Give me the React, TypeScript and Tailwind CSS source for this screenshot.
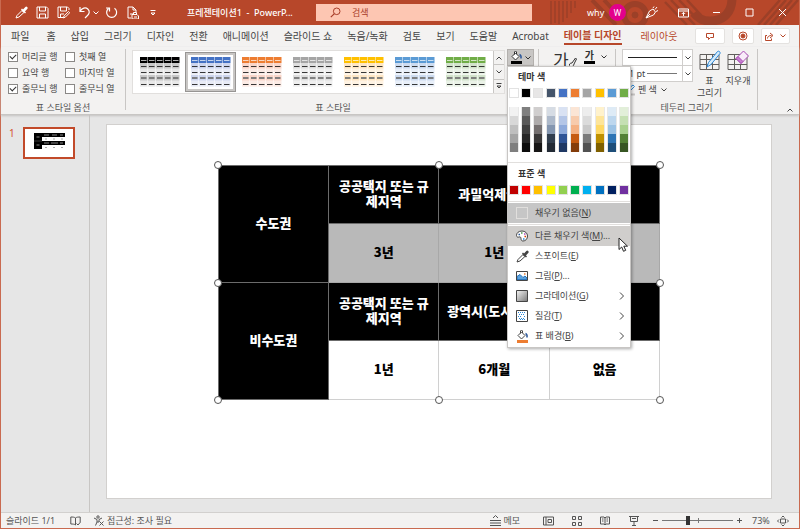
import type { ReactNode } from "react";

/* ---------- shared drawing helpers ---------- */

function Svg({ w, h, children, className = "" }: { w: number; h: number; children: ReactNode; className?: string }) {
  return (
    <svg width={w} height={h} viewBox={`0 0 ${w} ${h}`} fill="none" stroke="currentColor" className={`shrink-0 ${className}`} aria-hidden="true">
      {children}
    </svg>
  );
}

function Chevron({ dir = "down", className = "" }: { dir?: "down" | "up" | "right"; className?: string }) {
  const d = dir === "down" ? "M1.5 2.5 4 5l2.500-2.500" : dir === "up" ? "M1.500 5.500 4 3l2.500 2.500" : "M2 0.500 5.500 4 2 7.500";
  return (
    <Svg w={8} h={8} className={className}>
      <path d={d} />
    </Svg>
  );
}

/* ---------- title bar ---------- */

function DropperIcon() {
  return (
    <Svg w={13} h={13}>
      <path d="M1 12l1-2.500L7.500 4l2 2L4 11z" />
      <path d="M6.500 3l4 4" strokeWidth="1.500" />
      <path d="M8.500 5l2.800-3" strokeWidth="2.600" strokeLinecap="round" />
    </Svg>
  );
}

const quickAccess: { label: string; gap: string; icon: ReactNode }[] = [
  { label: "스포이트", gap: "ml-[14px]", icon: <DropperIcon /> },
  {
    label: "저장",
    gap: "ml-2",
    icon: (
      <Svg w={13} h={13}>
        <path d="M1 1h9.500L12 2.500V12H1zM3.500 1v4h6V1M3.500 12V8h6v4" />
      </Svg>
    ),
  },
  {
    label: "다른 이름으로 저장",
    gap: "ml-2",
    icon: (
      <Svg w={13} h={13}>
        <path d="M6 11.500H1V1h9.500L12 2.500V4M3.500 1v4h6V1M3.500 11.500V8H7M6.500 12l.5-2.200 4.500-4.300 1.200 1.200L8.500 11z" />
      </Svg>
    ),
  },
  {
    label: "실행 취소",
    gap: "ml-2",
    icon: (
      <Svg w={13} h={13}>
        <path d="M2 1v4.500h4.500M2 5.500C4 2 7.500 1 9.800 3c2.500 2.200 1.500 5-.8 7L7 12" strokeWidth="1.200" />
      </Svg>
    ),
  },
];

function TitleBar() {
  return (
    <header className="relative flex h-[25px] shrink-0 items-center overflow-hidden bg-[#b7472a] text-white">
      <svg className="absolute right-0 top-0" width="267" height="25" viewBox="0 0 267 25" fill="none" stroke="#9c4028" aria-hidden="true">
        <path d="M19 1v23M23 1v22M27 1v23M31 1v21M35 1v17M39 1v12M43 1v7" strokeWidth="1.500" />
        <path d="M60 0l24 25M72 0l14 15" strokeWidth="4" />
        <circle cx="103" cy="15" r="11" strokeWidth="6" />
        <circle cx="103" cy="15" r="3" fill="#9c4028" />
        <path d="M133 2l22 23M139 0l24 25M147 0l22 23M155 0l14 15" strokeWidth="2.500" />
        <path d="M200-2c0 14-8 23-22 23-8 0-12-3-16-8" strokeWidth="9" />
        <path d="M226 25l22-25M232 25l22-25M238 25l22-25M244 25l22-25" strokeWidth="2.500" />
      </svg>
      <div className="flex w-[315px] shrink-0 items-center">
        {quickAccess.map((q) => (
          <button key={q.label} aria-label={q.label} className={q.gap}>
            {q.icon}
          </button>
        ))}
        <button aria-label="실행 취소 목록" className="ml-px">
          <Chevron />
        </button>
        <button aria-label="다시 실행" className="ml-[5px]">
          <Svg w={13} h={13}>
            <path d="M3.500 2.500A5 5 0 1 0 9.500 2.300M1 2h3.500v3.500" strokeWidth="1.200" />
          </Svg>
        </button>
        <button aria-label="내보내기" className="ml-2">
          <Svg w={13} h={13}>
            <path d="M5 12H2V1h5l3 3v2M7 1v3h3M4 8h3" />
            <path d="M6 8.500h5l1.500 1.500V13H6zM7.500 8.500v-2h3v2M8 11h3" />
          </Svg>
        </button>
        <button aria-label="빠른 실행 도구 모음 사용자 지정" className="ml-[10px]">
          <Svg w={8} h={8}>
            <path d="M1.500 1.500h5M2 4l2 2 2-2z" />
          </Svg>
        </button>
        <h1 className="ml-[30px] whitespace-nowrap text-[9px] font-medium">프레젠테이션1&nbsp; -&nbsp; PowerP...</h1>
      </div>
      <label className="relative flex h-[17px] min-w-0 flex-1 items-center gap-[11px] bg-[#fdc6b2] pl-[14px] text-[#a83c28]">
        <Svg w={11} h={11}>
          <circle cx="6.700" cy="4.300" r="3.300" />
          <path d="M4.400 6.600.8 10.200" strokeWidth="1.200" />
        </Svg>
        <input aria-label="검색" placeholder="검색" className="w-full bg-transparent text-[9px] outline-none placeholder:text-[#a83c28]" />
      </label>
      <div className="relative flex w-[267px] shrink-0 items-center pl-[55px]">
        <span className="w-[17px] text-[9px]">why</span>
        <button aria-label="계정" className="ml-[5px] flex size-[17px] items-center justify-center rounded-full bg-[#e3008c] text-[8px]">
          W
        </button>
        <button aria-label="새로운 기능" className="ml-[19px]">
          <Svg w={14} h={13}>
            <path d="M1 12l3.500-7L8 3l2.500 3-2 3zM1 12l4-4M8 2l1-1.500M10 3.500l2-2.500M11 5.500l2-1" />
          </Svg>
        </button>
        <button aria-label="리본 메뉴 표시 옵션" className="ml-[19px]">
          <Svg w={11} h={10}>
            <path d="M.5 1h10v8H.5zM.5 3h10M5.500 8V4.500M3.800 6l1.700-1.700L7.200 6" />
          </Svg>
        </button>
        <button aria-label="최소화" className="ml-[23px]">
          <Svg w={9} h={9}>
            <path d="M1 4.500h7" />
          </Svg>
        </button>
        <button aria-label="최대화" className="ml-[24px]">
          <Svg w={9} h={9}>
            <path d="M1 1h7v7H1z" />
          </Svg>
        </button>
        <button aria-label="닫기" className="ml-[24px]">
          <Svg w={9} h={9}>
            <path d="M1 1l7 7M8 1 1 8" />
          </Svg>
        </button>
      </div>
    </header>
  );
}

/* ---------- ribbon tabs ---------- */

const tabs = ["파일", "홈", "삽입", "그리기", "디자인", "전환", "애니메이션", "슬라이드 쇼", "녹음/녹화", "검토", "보기", "도움말", "Acrobat", "테이블 디자인", "레이아웃"];

function tabStyle(name: string) {
  if (name === "파일") return "mr-[2px] text-[#444444]";
  if (name === "테이블 디자인") return "border-b-2 border-[#b7472a] font-bold text-[#b7472a]";
  if (name === "레이아웃") return "ml-1 text-[#b7472a]";
  return "text-[#444444]";
}

function TabRow() {
  return (
    <nav className="flex h-[22px] shrink-0 items-center pl-[10px] pr-[9px] text-[10px]">
      <div className="flex gap-[15px]">
        {tabs.map((t) => (
          <button key={t} className={`h-[17px] whitespace-nowrap leading-[15px] ${tabStyle(t)}`}>
            {t}
          </button>
        ))}
      </div>
      <div className="ml-auto flex gap-[7px] text-[#b7472a]">
        <button aria-label="메모" className="flex h-4 w-[30px] items-center justify-center rounded-xs border border-[#e4e2e0] bg-white">
          <Svg w={10} h={9}>
            <path d="M1.500 1.500h7v4h-3L3.500 7.500v-2h-2z" />
          </Svg>
        </button>
        <button aria-label="녹음/녹화" className="flex h-4 w-[22px] items-center justify-center rounded-xs border border-[#e4e2e0] bg-white">
          <Svg w={10} h={10}>
            <circle cx="5" cy="5" r="4" />
            <circle cx="5" cy="5" r="2" fill="currentColor" />
          </Svg>
        </button>
        <button aria-label="공유" className="flex h-4 w-[29px] items-center justify-center gap-[5px] rounded-xs border border-[#e4e2e0] bg-white">
          <Svg w={10} h={9}>
            <path d="M3 3.500H1.500v5h6V6.500M3.500 6.500c0-2 1.500-3 4-3M6 1l3 2.500L6 6" />
          </Svg>
          <Chevron />
        </button>
      </div>
    </nav>
  );
}

/* ---------- ribbon ---------- */

const styleOptions: [string, boolean][] = [
  ["머리글 행", true],
  ["첫째 열", false],
  ["요약 행", false],
  ["마지막 열", false],
  ["줄무늬 행", true],
  ["줄무늬 열", false],
];

const tableStyles = [
  { head: "#000000", band: "#c9c9c9", light: "#e8e8e8" },
  { head: "#4472c4", band: "#cdd5ee", light: "#e8ebf6" },
  { head: "#ed7d31", band: "#fad5c8", light: "#fcebe5" },
  { head: "#a5a5a5", band: "#dedede", light: "#efefef" },
  { head: "#ffc000", band: "#ffe6c3", light: "#fff3e3" },
  { head: "#5b9bd5", band: "#cddcf1", light: "#e8eff9" },
  { head: "#70ad47", band: "#d2e3cb", light: "#eaf2e7" },
];

function StyleThumb({ head, band, light }: { head: string; band: string; light: string }) {
  const cols = [0, 1, 2, 3, 4];
  const fills = [head, band, light, band, light];
  return (
    <svg width="40" height="30" viewBox="0 0 40 30" aria-hidden="true">
      {fills.map((f, r) =>
        cols.map((c) => (
          <g key={`${r}-${c}`}>
            <rect x={c * 8} y={r * 6} width="7.500" height={r === 0 ? 6 : 5.700} fill={f} />
            <rect
              x={c * 8 + 1}
              y={r * 6 + (r === 0 ? 3 : r === 3 ? 2 : 3)}
              width="5.500"
              height={r === 3 ? 2 : 1}
              fill={r === 0 ? "#ffffff" : r === 3 ? "#777777" : "#222222"}
              opacity={r === 0 ? 0.700 : 0.900}
            />
          </g>
        )),
      )}
    </svg>
  );
}

function Group({ label, className, children }: { label?: string; className: string; children: ReactNode }) {
  return (
    <section className={`relative flex shrink-0 flex-col ${className}`}>
      {children}
      {label && <h2 className="mt-auto text-center text-[9px] leading-[12px] text-[#555555]">{label}</h2>}
    </section>
  );
}

function Divider() {
  return <div className="mb-[4px] mt-[2px] w-px shrink-0 bg-[#c8c6c4]" />;
}

function PenSelect({ label, value, showValue }: { label: string; value: string; showValue: boolean }) {
  return (
    <label className="relative -mt-px flex h-[17px] w-[71px] items-center border border-[#d0cecc] bg-white">
      <select aria-label={label} className={`h-full w-full appearance-none bg-transparent pl-[6px] text-[9px] outline-none ${showValue ? "text-[#444444]" : "text-transparent"}`}>
        <option>{value}</option>
      </select>
      <span className={`pointer-events-none absolute right-[15px] h-px ${showValue ? "left-[24px] bg-[#777777]" : "left-[5px] bg-[#222222]"}`} />
      <span className="pointer-events-none absolute inset-y-0 right-0 flex w-[10px] items-center justify-center border-l border-[#d0cecc] text-[#444444]">
        <Chevron />
      </span>
    </label>
  );
}

function Bucket({ bar }: { bar: string }) {
  return (
    <Svg w={13} h={13}>
      <rect x="1" y="10" width="11" height="3" fill={bar} stroke="none" />
      <path d="M5.500 2 9 5.500 5.500 9 2 5.500zM4.500 3.500V1c0-1 2-1 2 0v2" fill="#ffffff" />
      <path d="M9.500 3.500c1.500.5 1.800 2 1.500 4" stroke="#2b579a" strokeWidth="1.500" />
    </Svg>
  );
}

function Ribbon() {
  return (
    <div className="relative z-10 flex h-[68px] shrink-0 border-b border-[#c8c6c4] shadow-[0_1px_2px_#c4c2c0]">
      <Group label="표 스타일 옵션" className="w-[124px]">
        <div className="grid grid-cols-[57px_1fr] pl-[7px] pt-[2px]">
          {styleOptions.map(([name, on]) => (
            <label key={name} className="flex h-4 items-center gap-1 whitespace-nowrap text-[9px] text-[#444444]">
              <input
                type="checkbox"
                defaultChecked={on}
                className="size-[10px] appearance-none border border-[#8a8886] bg-white checked:before:block checked:before:h-[4px] checked:before:w-[6px] checked:before:translate-x-px checked:before:translate-y-px checked:before:-rotate-45 checked:before:border-b checked:before:border-l checked:before:border-[#333333] checked:before:content-['']"
              />
              {name}
            </label>
          ))}
        </div>
      </Group>
      <Divider />
      <Group label="표 스타일" className="w-[412px] pl-[6px] pr-[4px]">
        <div className="mt-[2px] flex items-start gap-[2px]">
          <div className="mt-px flex h-11 w-[374px] border border-[#e1dfdd] bg-white">
            <div className="flex flex-1 items-center pl-px">
              {tableStyles.map((s, i) => (
                <button
                  key={s.head}
                  aria-label={`표 스타일 ${i + 1}`}
                  className={`flex h-10 w-[51px] items-center justify-center ${i === 1 ? "border border-[#979593] shadow-[inset_0_0_0_2px_#c8c6c4]" : ""}`}
                >
                  <StyleThumb {...s} />
                </button>
              ))}
            </div>
            <div className="flex w-[11px] flex-col divide-y divide-[#c8c6c4] border-l border-[#c8c6c4] bg-[#f3f2f1] text-[#444444]">
              <button aria-label="위로" className="flex flex-1 items-center justify-center">
                <Chevron dir="up" />
              </button>
              <button aria-label="아래로" className="flex flex-1 items-center justify-center">
                <Chevron />
              </button>
              <button aria-label="자세히" className="flex flex-1 items-center justify-center">
                <Svg w={8} h={8}>
                  <path d="M1.500 1.500h5M2 4h4L4 6z" />
                </Svg>
              </button>
            </div>
          </div>
          <div className="relative">
            <button aria-label="음영" className="flex h-[17px] w-[27px] items-center justify-center gap-px border border-[#b3b0ad] bg-[#c8c6c4] text-[#333333]">
              <Bucket bar="#000000" />
              <Chevron />
            </button>
            <FillMenu />
          </div>
        </div>
      </Group>
      <Divider />
      <Group className="w-[76px]">
        <div className="flex pt-[2px] text-[#333333]">
          <button aria-label="WordArt 빠른 스타일" className="ml-[14px] flex h-[22px] overflow-hidden text-[17px] leading-[24px]">
            가
            <Svg w={8} h={22}>
              <path d="M0 18c0-3 1-4 3-4l3.500-5 1 1L5 15c0 2-2 3-5 3z" />
            </Svg>
          </button>
          <button aria-label="텍스트 채우기" className="ml-[7px] flex items-center gap-[5px] self-start">
            <span className="border-b-[3px] border-black px-px text-[10px] font-bold leading-[12px]">가</span>
            <Chevron />
          </button>
        </div>
      </Group>
      <Divider />
      <Group label="테두리 그리기" className="w-[141px]">
        <div className="flex pl-[6px] pt-[3px]">
          <div>
            <PenSelect label="펜 스타일" value="실선" showValue={false} />
            <PenSelect label="펜 두께" value="1 pt" showValue />
            <button className="flex h-[16px] items-center gap-[3px] whitespace-nowrap text-[9px] text-[#444444]">
              <Svg w={13} h={12} className="text-[#2b88d8]">
                <path d="M5 8l1-3 5-4 1.500 1.500L8 7z" />
                <path d="M1 10.500h12" stroke="#c8c6c4" strokeWidth="2" />
              </Svg>
              펜 색
              <Chevron />
            </button>
          </div>
          <button className="ml-[3px] flex w-[27px] flex-col items-center text-[9px] leading-[12px] text-[#444444]">
            <Svg w={22} h={22}>
              <path d="M1 4.500h19v15H1zM1 9.500h19M1 14.500h19M7.500 4.500v15M13.500 4.500v15" stroke="#605e5c" />
              <path d="M8 17l1.500-4.500L18.500 1.500c1.500-1 3 .5 2.500 2L12 14.500z" fill="#d6ebfa" stroke="#2b88d8" />
            </Svg>
            <span className="pt-[3px]">표</span>
            <span className="whitespace-nowrap">그리기</span>
          </button>
          <button className="flex w-[30px] flex-col items-center text-[9px] leading-[12px] text-[#444444]">
            <Svg w={22} h={22}>
              <path d="M1 4.500h19v15H1zM1 9.500h9M1 14.500h19M7.500 4.500v15M13.500 14v5.500" stroke="#605e5c" />
              <path d="M9 8.500 16.500 1l5 5-7.500 7.500z" fill="#f8ebf9" stroke="#a84bb5" />
              <path d="M9 8.500l2-2 5 5-2 2z" fill="#c77fd0" stroke="#a84bb5" />
            </Svg>
            <span className="whitespace-nowrap pt-[3px]">지우개</span>
          </button>
        </div>
      </Group>
      <Divider />
      <button aria-label="리본 메뉴 축소" className="ml-auto mr-[5px] self-end text-[#444444]">
        <Chevron dir="up" />
      </button>
    </div>
  );
}

/* ---------- shading drop-down ---------- */

const themeColors = [
  { base: "#ffffff", tints: ["#f2f2f2", "#d8d8d8", "#bfbfbf", "#a5a5a5", "#7f7f7f"] },
  { base: "#000000", tints: ["#7f7f7f", "#595959", "#3f3f3f", "#262626", "#0c0c0c"] },
  { base: "#e7e6e6", tints: ["#d0cece", "#aeabab", "#757070", "#3a3838", "#171616"] },
  { base: "#44546a", tints: ["#d6dce4", "#adb9ca", "#8496b0", "#323f4f", "#222a35"] },
  { base: "#4472c4", tints: ["#d9e2f3", "#b4c6e7", "#8eaadb", "#2f5496", "#1f3864"] },
  { base: "#ed7d31", tints: ["#fbe5d5", "#f7cbac", "#f4b183", "#c55a11", "#833c0b"] },
  { base: "#a5a5a5", tints: ["#ededed", "#dbdbdb", "#c9c9c9", "#7b7b7b", "#525252"] },
  { base: "#ffc000", tints: ["#fff2cc", "#fee599", "#ffd965", "#bf9000", "#7f6000"] },
  { base: "#5b9bd5", tints: ["#deebf6", "#bdd7ee", "#9cc3e5", "#2e75b5", "#1e4e79"] },
  { base: "#70ad47", tints: ["#e2efd9", "#c5e0b3", "#a8d08d", "#538135", "#375623"] },
];

const standardColors = ["#c00000", "#ff0000", "#ffc000", "#ffff00", "#92d050", "#00b050", "#00b0f0", "#0070c0", "#002060", "#7030a0"];

function Swatch({ color }: { color: string }) {
  return <button aria-label={color} className="block size-[10px] border border-[#e2e2e2]" style={{ backgroundColor: color }} />;
}

const menuItems: { text: string; accel: string; tail?: string; sub?: boolean; hot?: boolean; icon: ReactNode }[] = [
  {
    text: "다른 채우기 색",
    accel: "M",
    tail: "...",
    hot: true,
    icon: (
      <Svg w={12} h={12}>
        <path d="M6 1C2.500 1 .5 3 .5 5.500c0 1.500 1.500 2 2.500 1.500 1.500-.5 2 .5 2 1.500C5 10.500 6 11 7 11c2.500 0 4.500-2 4.500-5S9 1 6 1z" fill="#ffffff" />
        <path d="M2.500 4.500h1.500" stroke="#2b579a" strokeWidth="1.500" />
        <path d="M5 3h1.500" stroke="#4a9b4a" strokeWidth="1.500" />
        <path d="M8 4h1.500" stroke="#a84bb5" strokeWidth="1.500" />
        <path d="M8.500 6.500H10" stroke="#d83b01" strokeWidth="1.500" />
        <path d="M7 9h1.500" stroke="#2b88d8" strokeWidth="1.500" />
      </Svg>
    ),
  },
  { text: "스포이트", accel: "E", icon: <DropperIcon /> },
  {
    text: "그림",
    accel: "P",
    tail: "...",
    icon: (
      <Svg w={12} h={10}>
        <path d="M1 5.500 4 3.500l3 3 2-1.500 2 2V8.500H1z" fill="#5ba3e0" stroke="#2b75bb" />
        <path d="M8 3h1.500" stroke="#ed7d31" strokeWidth="1.500" />
        <path d="M.5.500h11v9H.5z" />
      </Svg>
    ),
  },
  {
    text: "그라데이션",
    accel: "G",
    sub: true,
    icon: (
      <Svg w={12} h={12}>
        <defs>
          <linearGradient id="menu-gradient" x1="0" y1="0" x2="1" y2="1">
            <stop offset="0" stopColor="#f6f6f6" />
            <stop offset="1" stopColor="#787878" />
          </linearGradient>
        </defs>
        <path d="M.5.5h11v11H.5z" fill="url(#menu-gradient)" />
      </Svg>
    ),
  },
  {
    text: "질감",
    accel: "T",
    sub: true,
    icon: (
      <Svg w={12} h={12}>
        <path d="M.5.5h11v11H.5z" fill="#ffffff" />
        <path d="M2 2.500h8M2 6.500h3M8 6.500h2M4 9.500h6" stroke="#2b88d8" strokeDasharray="1 1" />
        <path d="M3 4.500h5M3 8.500h6" stroke="#2b88d8" strokeDasharray="1 1" />
      </Svg>
    ),
  },
  { text: "표 배경", accel: "B", sub: true, icon: <Bucket bar="#ed7d31" /> },
];

function FillMenu() {
  return (
    <div role="menu" className="absolute left-0 top-[17px] z-20 w-[124px] border border-[#c8c6c4] bg-white text-[9px] text-[#444444] shadow-[1px_1px_3px_#00000055]">
      <h3 className="pl-[10px] pt-[2px] font-bold leading-[15px] text-[#333333]">테마 색</h3>
      <div className="flex justify-between px-px pt-[4px]">
        {themeColors.map((c) => (
          <div key={c.base}>
            <Swatch color={c.base} />
            <div className="mt-[9px] border-x border-[#e8e8e8]">
              {c.tints.map((t) => (
                <button key={t} aria-label={t} className="block h-[9px] w-2" style={{ backgroundColor: t }} />
              ))}
            </div>
          </div>
        ))}
      </div>
      <h3 className="mt-[10px] border-t border-[#e1dfdd] pl-[10px] pt-[3px] font-bold leading-[15px] text-[#333333]">표준 색</h3>
      <div className="flex justify-between px-px pb-[6px] pt-[4px]">
        {standardColors.map((c) => (
          <Swatch key={c} color={c} />
        ))}
      </div>
      <div className="border-t border-[#e1dfdd] pt-px">
        <button role="menuitem" className="flex h-5 w-full items-center gap-[7px] whitespace-nowrap bg-[#c6c6c6] pl-[8px]">
          <span className="size-3 border border-[#e1dfdd]" />
          <span>
            채우기 없음(<u>N</u>)
          </span>
        </button>
      </div>
      <div className="mt-px border-t border-[#e1dfdd] pb-px pt-px">
        {menuItems.map((m) => (
          <button key={m.text} role="menuitem" className={`flex h-5 w-full items-center whitespace-nowrap pl-[8px] pr-[4px] ${m.hot ? "bg-[#d0cecc]" : ""}`}>
            <span className="flex w-[19px]">{m.icon}</span>
            <span>
              {m.text}(<u>{m.accel}</u>){m.tail}
            </span>
            {m.sub && <Chevron dir="right" className="ml-auto" />}
          </button>
        ))}
      </div>
      <Svg w={11} h={16} className="absolute left-[110px] top-[170px]">
        <path d="M1 1v11.500l2.700-2.500 1.800 4.300 2.200-1-1.900-4.100H9.500z" fill="#ffffff" stroke="#222222" />
      </Svg>
    </div>
  );
}

/* ---------- workspace ---------- */

function MiniSlide() {
  return (
    <button aria-label="슬라이드 1" className="h-8 w-[52px] border-2 border-[#c24a2a] bg-white">
      <svg width="48" height="28" viewBox="0 0 48 28" aria-hidden="true">
        <path d="M9 4h31v4H17v4h23v4H17v4H9z" fill="#000000" />
        <path d="M11.500 8h3M11.500 16h3M19 6h5M27 6h5M35 6h3M19 14h5M26 14h7M35 14h3" stroke="#888888" />
        <path d="M9 12h8" stroke="#777777" strokeWidth=".5" />
        <path d="M20 10h2M28 10h2M36 10h2M20 18.500h2M28 18.500h2M36 18.500h2" stroke="#aaaaaa" />
      </svg>
    </button>
  );
}

const handles = [
  "left-0 top-0",
  "left-1/2 top-0",
  "left-full top-0",
  "left-0 top-1/2",
  "left-full top-1/2",
  "left-0 top-full",
  "left-1/2 top-full",
  "left-full top-full",
];

const headCell = "h-[58px] border border-[#6b6b6b] bg-black px-0 pb-[3px] pt-0 font-black text-white";
const bandCell = "border border-[#a8a8a8] bg-[#b9b9b9] px-0 pb-[3px] pt-0";
const plainCell = "border border-[#d0d0d0] bg-white px-0 pb-[3px] pt-0";

function SlideTable() {
  return (
    <div className="relative mx-auto w-2/3">
      <table className="w-full table-fixed border-collapse border border-[#8a8a8a] text-center font-['Noto_Sans_CJK_KR',sans-serif] text-[13px] font-black leading-[15px] text-black">
        <tbody>
          <tr>
            <th rowSpan={2} className={headCell}>수도권</th>
            <th className={headCell}>공공택지 또는 규<br />제지역</th>
            <th className={headCell}>과밀억제권역</th>
            <th className={headCell} />
          </tr>
          <tr className="h-[59px]">
            <td className={bandCell}>3년</td>
            <td className={bandCell}>1년</td>
            <td className={bandCell} />
          </tr>
          <tr>
            <th rowSpan={2} className={headCell}>비수도권</th>
            <th className={headCell}>공공택지 또는 규<br />제지역</th>
            <th className={`${headCell} whitespace-nowrap`}>광역시(도시지역)</th>
            <th className={headCell} />
          </tr>
          <tr className="h-[59px]">
            <td className={plainCell}>1년</td>
            <td className={plainCell}>6개월</td>
            <td className={plainCell}>없음</td>
          </tr>
        </tbody>
      </table>
      {handles.map((h) => (
        <span key={h} className={`absolute size-2 -translate-x-1/2 -translate-y-1/2 rounded-full border border-[#555555] bg-white ${h}`} />
      ))}
    </div>
  );
}

function Workspace() {
  return (
    <main className="flex flex-1 bg-[#e6e6e6]">
      <aside className="flex w-[89px] shrink-0 items-start border-r border-[#c8c6c4] pl-2 pt-[12px]">
        <span className="w-[14px] text-[10px] leading-[12px] text-[#d5502f]">1</span>
        <MiniSlide />
      </aside>
      <div className="flex-1 pb-[11px] pl-[16px] pr-[27px] pt-[9px]">
        <div className="aspect-video w-full border border-[#d2d0ce] bg-white pt-10">
          <SlideTable />
        </div>
      </div>
    </main>
  );
}

/* ---------- status bar ---------- */

function StatusBar() {
  return (
    <footer className="flex h-4 shrink-0 items-center border-t border-[#d2d0ce] pl-[5px] pr-[10px] text-[9px] text-[#555555]">
      <span className="w-[64px] whitespace-nowrap">슬라이드 1/1</span>
      <button aria-label="맞춤법 검사">
        <Svg w={11} h={10}>
          <path d="M5.500 2v7M5.500 2C4.500 1 2.500 1 .8 1v7c1.700 0 3.700 0 4.700 1M5.500 2c1-1 3-1 4.700-1v5M6.500 7.500 8 9l2.500-3" />
        </Svg>
      </button>
      <button className="ml-[12px] flex items-center gap-[3px] whitespace-nowrap">
        <Svg w={11} h={11}>
          <circle cx="5" cy="2" r="1.200" />
          <path d="M1 3l3 1.500V7l-1.500 3.500M9 3 6 4.500V7M4 7h2M6.500 6.500l4 4M10.500 6.500l-4 4" />
        </Svg>
        접근성: 조사 필요
      </button>
      <button className="ml-auto flex items-center gap-[2px]">
        <Svg w={11} h={11}>
          <path d="M0 5.500h11M0 8h11M0 10.500h11M3 3l2.500-2.500L8 3" />
        </Svg>
        메모
      </button>
      <button aria-label="기본" className="ml-[23px]">
        <Svg w={11} h={10}>
          <path d="M.5 1h10v8H.5zM3 1v8M5 3.500h3.500v3H5z" />
        </Svg>
      </button>
      <button aria-label="여러 슬라이드" className="ml-[18px]">
        <Svg w={10} h={10}>
          <path d="M.5.500h3v3h-3zM6.500.500h3v3h-3zM.5 6.500h3v3h-3zM6.500 6.500h3v3h-3z" />
        </Svg>
      </button>
      <button aria-label="읽기용 보기" className="ml-[18px]">
        <Svg w={10} h={10}>
          <path d="M5 2v7M.5 1H4l1 1 1-1h3.500v7H6L5 9 4 8H.5zM2 3h1.500M2 5h1.500M6.500 3H8M6.500 5H8" />
        </Svg>
      </button>
      <button aria-label="슬라이드 쇼" className="ml-[19px]">
        <Svg w={10} h={11}>
          <path d="M0 1.500h10M1.500 1.500v5h7v-5M5 6v4M3 10.500h4M3 3.500h4" />
        </Svg>
      </button>
      <button aria-label="축소" className="ml-[13px]">
        <Svg w={7} h={7}>
          <path d="M1 3.500h5" />
        </Svg>
      </button>
      <span className="relative ml-[3px] flex items-center">
        <input
          type="range"
          aria-label="확대/축소"
          min={0}
          max={100}
          defaultValue={36}
          className="h-[10px] w-[71px] appearance-none bg-transparent [&::-webkit-slider-runnable-track]:h-px [&::-webkit-slider-runnable-track]:bg-[#777777] [&::-webkit-slider-thumb]:-mt-[4px] [&::-webkit-slider-thumb]:h-[9px] [&::-webkit-slider-thumb]:w-[4px] [&::-webkit-slider-thumb]:appearance-none [&::-webkit-slider-thumb]:bg-[#333333]"
        />
        <span className="pointer-events-none absolute left-1/2 h-[5px] w-px bg-[#777777]" />
      </span>
      <button aria-label="확대" className="ml-[3px]">
        <Svg w={7} h={7}>
          <path d="M1 3.500h5M3.500 1v5" />
        </Svg>
      </button>
      <span className="ml-[9px] w-[18px]">73%</span>
      <button aria-label="창에 맞춤" className="ml-[7px]">
        <Svg w={12} h={12}>
          <path d="M3.500 4h5v4h-5zM4.500 2.500 6 1l1.500 1.500M4.500 9.500 6 11l1.500-1.500M2 4.500.5 6 2 7.500M10 4.500 11.500 6 10 7.500" />
        </Svg>
      </button>
    </footer>
  );
}

export default function App() {
  return (
    <div className="flex min-h-screen flex-col border-x border-b border-[#c96a50] bg-[#f3f2f1] font-['Noto_Sans','Noto_Sans_CJK_KR',sans-serif]">
      <TitleBar />
      <TabRow />
      <Ribbon />
      <Workspace />
      <StatusBar />
    </div>
  );
}
